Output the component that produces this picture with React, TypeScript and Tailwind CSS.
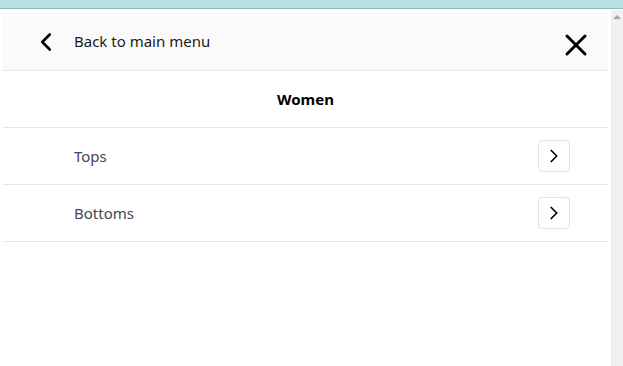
import { ChevronLeft, ChevronRight, X } from 'lucide-react';

const items = ['Tops', 'Bottoms'];

export default function App() {
  return (
    <div className="h-[366px] w-[623px] overflow-hidden bg-white font-['Noto_Sans',sans-serif]">
      {/* top accent strip */}
      <div className="h-[9px] bg-[#b5e0e5] border-b border-[#8fb8bd]" />

      <div className="flex h-[357px]">
        <div className="flex-1 px-[3px] pt-[4px]">
          {/* header */}
          <div className="flex h-[58px] items-center border-b border-[#e5e5e5] bg-[#fafafa]">
            <button className="ml-[27px] flex h-8 w-8 items-center justify-center text-black">
              <ChevronLeft size={30} strokeWidth={2.1} />
            </button>
            <span className="ml-[12px] text-[15px] text-[#1a1a1a]">Back to main menu</span>
            <button className="ml-auto mr-[14px] mt-[7px] flex h-9 w-9 items-center justify-center text-black">
              <X size={36} strokeWidth={2} />
            </button>
          </div>

          {/* title */}
          <div className="flex h-[57px] items-center justify-center border-b border-[#e5e5e5]">
            <span className="text-[15px] font-bold text-black">Women</span>
          </div>

          {/* sub items */}
          {items.map((item) => (
            <div
              key={item}
              className="flex h-[57px] items-center border-b border-[#e5e5e5] pl-[71px] pr-[38px]"
            >
              <span className="text-[15px] text-[#3f4654]">{item}</span>
              <button className="ml-auto flex h-8 w-8 items-center justify-center rounded-[4px] border border-[#e3e3e3] bg-white text-black">
                <ChevronRight size={22} strokeWidth={1.9} />
              </button>
            </div>
          ))}
        </div>

        {/* scrollbar track */}
        <div className="mt-[1px] flex w-[12px] justify-center bg-[#f0f0f0] pt-[5px]">
          <div className="h-0 w-0 border-x-[4px] border-b-[4px] border-x-transparent border-b-[#a3a3a3]" />
        </div>
      </div>
    </div>
  );
}
